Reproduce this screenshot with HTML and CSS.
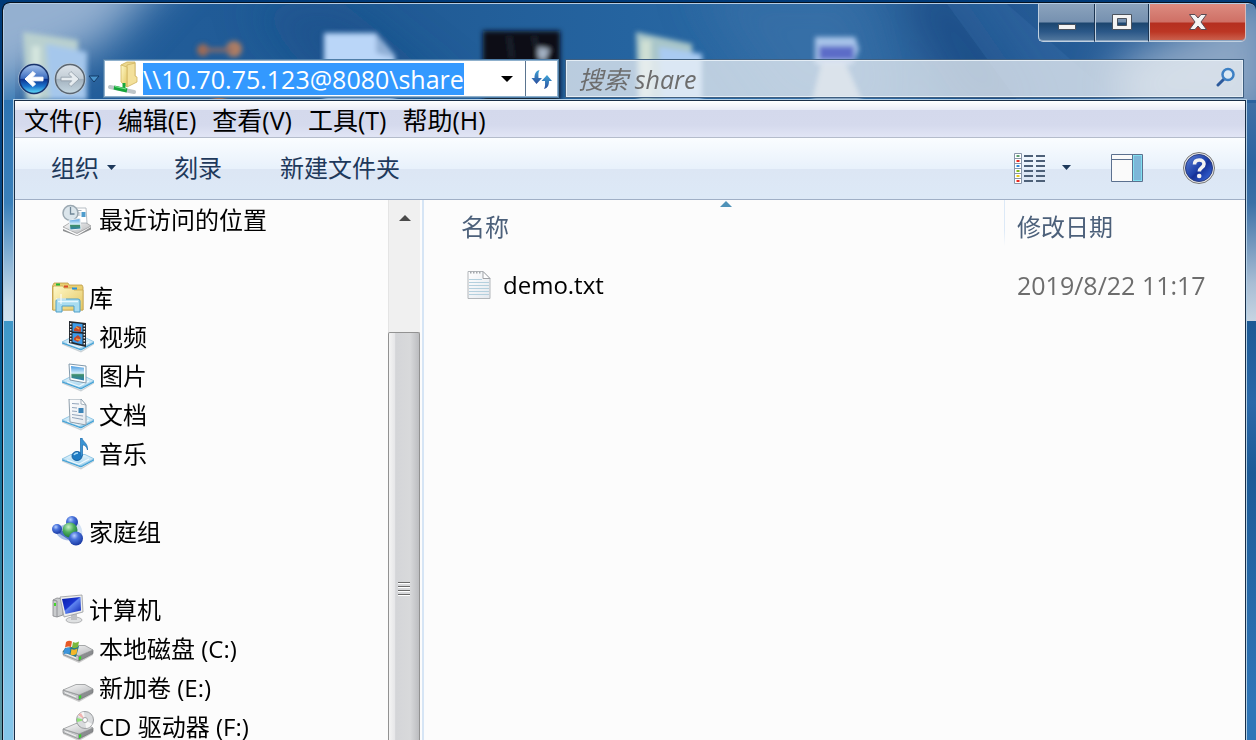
FILE: index.html
```html
<!DOCTYPE html>
<html lang="zh-CN">
<head>
    <meta charset="UTF-8">
    <meta name="viewport" content="width=device-width, initial-scale=1.0">
    <title>share</title>
    <link rel="stylesheet" href="styles.css">
</head>
<body>
    <!-- shared gradients and the glass tray under the library icons -->
    <svg class="defs" width="0" height="0" aria-hidden="true">
        <defs>
            <linearGradient id="gTray" x1="0" y1="0" x2="0" y2="1">
                <stop offset="0" stop-color="#e4f4fc"/><stop offset="1" stop-color="#9fd2ee"/>
            </linearGradient>
            <linearGradient id="gGray" x1="0" y1="0" x2="1" y2="1">
                <stop offset="0" stop-color="#fcfcfc"/><stop offset="1" stop-color="#b4b6b9"/>
            </linearGradient>
            <linearGradient id="gFolder" x1="0" y1="0" x2="1" y2="1">
                <stop offset="0" stop-color="#fff9c9"/><stop offset="1" stop-color="#e4c763"/>
            </linearGradient>
            <linearGradient id="gPaper" x1="0" y1="0" x2="1" y2="1">
                <stop offset="0" stop-color="#ffffff"/><stop offset="1" stop-color="#e3e8ee"/>
            </linearGradient>
            <linearGradient id="gSky" x1="0" y1="0" x2="0" y2="1">
                <stop offset="0" stop-color="#4a9be0"/><stop offset=".5" stop-color="#d5effb"/><stop offset=".6" stop-color="#3f8f6a"/><stop offset="1" stop-color="#2b7fb8"/>
            </linearGradient>
            <linearGradient id="gScreen" x1="0" y1="0" x2="1" y2="1">
                <stop offset="0" stop-color="#0a1fa8"/><stop offset=".45" stop-color="#1a35d0"/><stop offset=".5" stop-color="#5f85f0"/><stop offset="1" stop-color="#0a22b4"/>
            </linearGradient>
            <radialGradient id="gBlue" cx=".38" cy=".3" r=".7">
                <stop offset="0" stop-color="#b8d0ff"/><stop offset=".4" stop-color="#4a74dc"/><stop offset="1" stop-color="#1a3aa4"/>
            </radialGradient>
            <radialGradient id="gGreen" cx=".4" cy=".3" r=".7">
                <stop offset="0" stop-color="#c8f0c8"/><stop offset=".5" stop-color="#4fb060"/><stop offset="1" stop-color="#1f7a3c"/>
            </radialGradient>
            <linearGradient id="gBack" x1="0" y1="0" x2="0" y2="1">
                <stop offset="0" stop-color="#a9c6ee"/><stop offset=".48" stop-color="#3b6cc0"/><stop offset=".5" stop-color="#0b2f8c"/><stop offset=".75" stop-color="#1b74cc"/><stop offset="1" stop-color="#62e0fa"/>
            </linearGradient>
            <linearGradient id="gForward" x1="0" y1="0" x2="0" y2="1">
                <stop offset="0" stop-color="#dde4ea"/><stop offset=".48" stop-color="#c2cdd6"/><stop offset=".5" stop-color="#a3b2bf"/><stop offset="1" stop-color="#c6d8e2"/>
            </linearGradient>
            <linearGradient id="gHelp" x1="0" y1="0" x2="1" y2="1">
                <stop offset="0" stop-color="#5f84d8"/><stop offset=".5" stop-color="#1c3fa8"/><stop offset=".55" stop-color="#143096"/><stop offset="1" stop-color="#3f74e8"/>
            </linearGradient>
            <linearGradient id="gArrow" x1="0" y1="0" x2="0" y2="1">
                <stop offset="0" stop-color="#3fa3d6"/><stop offset="1" stop-color="#2b4f9e"/>
            </linearGradient>
            <symbol id="tray" viewBox="0 0 32 32">
                <path d="M0 23.500 19 31.500 32 23.500v-1L19 30 0 22z" fill="#9aa7b0" opacity=".5"/>
                <path d="M0 21v1.600L19 29.600 32 22.400v-1.600L19 27.500z" fill="#3d9fd6"/>
                <path d="M0 21 9 16.500h14L32 20.800 19 28z" fill="url(#gTray)" stroke="#7dbde0" stroke-width=".8"/>
                <path d="M5 22 17 26.400 27 21" fill="none" stroke="#fff" stroke-width="1.200" opacity=".8"/>
            </symbol>
            <symbol id="drive" viewBox="0 0 32 32">
                <path d="M1 21 17 28 31 20v2L17 30 1 23z" fill="#9c9c9c" opacity=".5"/>
                <path d="M1 18v3.500l16 6.500v-5z" fill="#c6c8ca" stroke="#808284" stroke-width=".7"/>
                <path d="M17 23v5l14-7.500v-3.500z" fill="#8b8d90" stroke="#707274" stroke-width=".7"/>
                <path d="M1 18 14 12.500h9L31 17 17 23z" fill="url(#gGray)" stroke="#939597" stroke-width=".8"/>
                <path d="M3 20.500 14 25" stroke="#f2f2f2" stroke-width="1"/>
                <path d="M17 24v3.200l2.200-1.200v-3z" fill="#35d626"/>
            </symbol>
        </defs>
    </svg>

    <div class="window">
        <!-- blurred desktop icons behind the glass -->
        <svg class="glass" width="1252" height="96" aria-hidden="true">
            <defs>
                <filter id="soft" x="-20%" y="-20%" width="140%" height="140%"><feGaussianBlur stdDeviation="2.500"/></filter>
                <filter id="haze" x="-40%" y="-60%" width="180%" height="220%"><feGaussianBlur stdDeviation="22"/></filter>
            </defs>
            <g filter="url(#haze)">
                <path d="M-60-60H190L100 40-60 110z" fill="#94b0d0"/>
                <path d="M245 0H340L460 96H330z" fill="#144a84" opacity=".45"/>
                <path d="M690-20H860L900 110H780z" fill="#3c73aa" opacity=".5"/>
                <path d="M890-20H950L1040 110H960z" fill="#12457e" opacity=".6"/>
                <path d="M1110 60 1270-20V120H1120z" fill="#8ca6c4"/>
            </g>
            <path d="M943 0h60l110 96H1013z" fill="#3e72ae" opacity=".25"/>
            <g filter="url(#soft)">
                <path d="M19 28 74 36V96H22z" fill="#b9d0cf"/>
                <path d="M42 40 83 48V96H46z" fill="#a5c7ec"/>
                <path d="M28 42h8V96h-8z" fill="#d5e6df"/>
                <circle cx="199" cy="46" r="6" fill="#a06a52"/><circle cx="230" cy="45" r="8" fill="#ad7d63"/>
                <path d="M200 44h28v4h-28z" fill="#8a6a66"/><circle cx="215" cy="94" r="6" fill="#a86c4c"/>
                <path d="M320 29H372L391 52V96H320z" fill="#bad6f8"/>
                <path d="M372 29v20l18 5z" fill="#8faed4"/>
                <path d="M479 27H556V96H479z" fill="#080c14"/>
                <path d="M534 43l12 2-5 12-7-3z" fill="#a4b2c4"/><path d="M505 32l3 22M530 32l2 10" stroke="#222b38" stroke-width="3"/>
                <path d="M632 28 688 40V96H634z" fill="#a9c6c9"/>
                <path d="M655 43 698 50V96H658z" fill="#a9cbf2"/>
                <path d="M637 36h10V96h-10z" fill="#cfe0d4"/>
                <path d="M811 33h40l4 12-6 15h-38z" fill="#a9c5ea"/>
                <path d="M815 42h35v14h-35z" fill="#5c6cc8"/>
                <path d="M817 60h25l16 36h-50z" fill="#a8bccf"/>
            </g>
        </svg>

        <header class="frame-top">
            <div class="caption-buttons">
                <button class="caption minimize" aria-label="最小化">
                    <svg width="20" height="20" viewBox="0 0 20 20"><path d="M1.500 11.500h17v5h-17z" fill="#f4f4f4" stroke="#4b535e"/></svg>
                </button>
                <button class="caption maximize" aria-label="最大化">
                    <svg width="20" height="20" viewBox="0 0 20 20"><path fill-rule="evenodd" d="M.5 1.500h19v15H.5zM5.500 5.500v7h9v-7z" fill="#f4f4f4" stroke="#4b535e"/></svg>
                </button>
                <button class="caption close" aria-label="关闭">
                    <svg width="20" height="20" viewBox="0 0 20 20"><path d="M1.500 1.500h5.500L10 5l3-3.500h5.500L13 9l5.500 7.500H13L10 13l-3 3.500H1.500L7 9z" fill="#f4f4f4" stroke="#5a4a52"/></svg>
                </button>
            </div>
            <div class="nav-row">
                <div class="travel">
                    <button class="travel-button" aria-label="后退">
                        <svg width="34" height="36" viewBox="0 0 34 36">
                            <circle cx="17" cy="18" r="16" fill="#b9c8d5" opacity=".7"/>
                            <circle cx="17" cy="18" r="14.500" fill="url(#gBack)" stroke="#18346c" stroke-width="1.500"/>
                            <path d="M8 18l8-7.500 2.500 2.500-3.200 3.200H26v3.600H15.300l3.200 3.200L16 25.500z" fill="#fff" stroke="#fff" stroke-linejoin="round"/>
                        </svg>
                    </button>
                    <button class="travel-button" aria-label="前进" disabled>
                        <svg width="34" height="36" viewBox="0 0 34 36">
                            <circle cx="17" cy="18" r="16" fill="#c6d3dd" opacity=".7"/>
                            <circle cx="17" cy="18" r="14.500" fill="url(#gForward)" stroke="#5b6671" stroke-width="1.500"/>
                            <path d="M26 18l-8-7.500-2.500 2.500 3.200 3.200H8v3.600h10.700l-3.200 3.200 2.500 2.500z" fill="#e6ecf0" stroke="#8e9ba6" stroke-width=".8" stroke-linejoin="round"/>
                        </svg>
                    </button>
                    <button class="recent" aria-label="最近的页面">
                        <svg width="12" height="8" viewBox="0 0 12 8"><path d="M1 1h10L6 7z" fill="#4b95cc" stroke="#133a66"/></svg>
                    </button>
                </div>
                <div class="address">
                    <svg class="share-icon" width="32" height="34" viewBox="0 0 32 34" aria-hidden="true">
                        <path d="M13 4 19 1h8v20l-8 4z" fill="#ecd88e" stroke="#cbb05a" stroke-width=".8"/>
                        <path d="M19 4l8-2v13l2 1v5l-10 5z" fill="#f3e09a" stroke="#cfb260" stroke-width=".8"/>
                        <path d="M13 4l6 2v20l-6-5z" fill="url(#gFolder)" stroke="#d2b662" stroke-width=".8"/>
                        <path d="M16 22v6" stroke="#18a83c" stroke-width="3"/>
                        <path d="M2 26 26 31" stroke="#bfc6c9" stroke-width="4" stroke-linecap="round"/>
                        <path d="M6 26.500 19 29.500" stroke="#14a63a" stroke-width="4"/>
                        <path d="M7 25.500 18 28" stroke="#7be08c" stroke-width="1.200"/>
                    </svg>
                    <input class="address-input" id="address" type="text" aria-label="地址" value="\\10.70.75.123@8080\share" spellcheck="false">
                    <button class="address-drop" aria-label="以前的位置">
                        <svg width="12" height="6" viewBox="0 0 12 6"><path d="M0 0h12L6 6z" fill="#000"/></svg>
                    </button>
                    <button class="refresh" aria-label="刷新">
                        <svg width="24" height="24" viewBox="0 0 24 24">
                            <path d="M9.500 3C5.500 4 4.500 7 4.500 11H1.500l5 6 5.500-6H8.500C8.500 8 8 5.500 9.500 3z" fill="url(#gArrow)"/>
                            <path d="M14 22c4-1 5-4 5-8h3l-5-6-5.500 6H15c0 3 .5 5.500-1 8z" fill="url(#gArrow)"/>
                        </svg>
                    </button>
                </div>
                <div class="search">
                    <input class="search-input" type="text" aria-label="搜索" placeholder="搜索 share">
                    <svg width="20" height="24" viewBox="0 0 20 24" aria-hidden="true">
                        <path d="M2 18l7-7" stroke="#2c5a9c" stroke-width="3" stroke-linecap="round"/>
                        <circle cx="12" cy="7.500" r="5.500" fill="#dbe9f4" stroke="#3d80c4" stroke-width="2.500"/>
                    </svg>
                </div>
            </div>
        </header>

        <div class="client">
            <nav class="menu-bar">
                <button class="menu-item">文件(F)</button>
                <button class="menu-item">编辑(E)</button>
                <button class="menu-item">查看(V)</button>
                <button class="menu-item">工具(T)</button>
                <button class="menu-item">帮助(H)</button>
            </nav>

            <div class="toolbar">
                <button class="tool">组织 <svg class="tool-arrow" width="9" height="5" viewBox="0 0 9 5"><path d="M0 0h9L4.500 5z" fill="#1e395b"/></svg></button>
                <button class="tool">刻录</button>
                <button class="tool">新建文件夹</button>
                <div class="tool-icons">
                    <button class="icon-button view-mode" aria-label="更改您的视图">
                        <svg width="32" height="32" viewBox="0 0 32 32">
                            <path d="M.5 1.500h7v30h-7z" fill="#fff" stroke="#8794a8"/>
                            <path d="M1 6.500h6M1 11.500h6M1 16.500h6M1 21.500h6M1 26.500h6" stroke="#8794a8"/>
                            <path d="M2.500 3h3v2h-3z" fill="#5c9e6e"/><path d="M2.500 8h3v2h-3z" fill="#e8281e"/><path d="M2.500 13h3v2h-3z" fill="#2f86d8"/>
                            <path d="M2.500 18h3v2h-3z" fill="#83b81a"/><path d="M2.500 23h3v2h-3z" fill="#e8c81a"/><path d="M2.500 28h3v2h-3z" fill="#e8281e"/>
                            <path d="M10 4h9M22 4h9M10 9h9M22 9h9M10 14h9M22 14h9M10 19h9M22 19h9M10 24h9M22 24h9M10 29h9M22 29h9" stroke="#4d6078" stroke-width="2"/>
                        </svg>
                        <svg width="9" height="5" viewBox="0 0 9 5"><path d="M0 0h9L4.500 5z" fill="#1e395b"/></svg>
                    </button>
                    <button class="icon-button" aria-label="显示预览窗格">
                        <svg width="32" height="28" viewBox="0 0 32 28">
                            <path d="M.5.5h31v27H.5z" fill="#fafafa" stroke="#5b708f"/>
                            <path d="M1 5.500h20.500M21.500 1v26" stroke="#5b708f"/>
                            <path d="M22.500 1.500h8v25h-8z" fill="#7db6d8" stroke="#7fe0f0"/>
                        </svg>
                    </button>
                    <button class="icon-button" aria-label="获取帮助">
                        <svg width="32" height="32" viewBox="0 0 32 32">
                            <circle cx="16" cy="16" r="15.500" fill="#e6e6e6" stroke="#777"/>
                            <circle cx="16" cy="16" r="13.500" fill="url(#gHelp)" stroke="#2a3c80"/>
                            <path d="M11.500 12.500c0-3 2-4.500 4.700-4.500 2.800 0 4.800 1.500 4.800 4 0 3.800-4.700 3.500-4.700 7.500" fill="none" stroke="#f2f2f2" stroke-width="3.600"/>
                            <circle cx="16.200" cy="24" r="2.300" fill="#f2f2f2"/>
                        </svg>
                    </button>
                </div>
            </div>

            <div class="panes">
                <aside class="sidebar">
                    <div class="tree">
                        <ul class="group">
                            <li class="leaf">
                                <svg width="32" height="32" viewBox="0 0 32 32" aria-hidden="true">
                                    <path d="M1 25 15 31.500 29 23v2.500L15 32 1 27z" fill="#8d8f91"/>
                                    <path d="M1 23 9 18h14l6 4-14 7.500z" fill="url(#gGray)" stroke="#909294" stroke-width=".7"/>
                                    <path d="M13 4h11l1 15H13z" fill="#fff" stroke="#a5adb5" stroke-width=".8"/>
                                    <path d="M14.500 6.500h5M14.500 9h4M14.500 11h4" stroke="#a8b4be"/>
                                    <path d="M19.500 8h4v5h-4z" fill="#4f9ccc"/>
                                    <circle cx="8.500" cy="9" r="7.500" fill="#dbe5eb" stroke="#9ba8b1" stroke-width="1.500"/>
                                    <path d="M8.500 3v7h4" fill="none" stroke="#6f8596" stroke-width="1.300"/>
                                    <path d="M7 16 18 14.500 19 25 8 26z" fill="url(#gSky)" stroke="#e8eef2"/>
                                </svg>
                                <span>最近访问的位置</span>
                            </li>
                        </ul>
                        <ul class="group">
                            <li class="root">
                                <svg width="32" height="32" viewBox="0 0 32 32" aria-hidden="true">
                                    <path d="M1 3l1-2h14l1 2h13l1 2v23H.5V4z" fill="#e9cf72" stroke="#bd9b45" stroke-width=".8"/>
                                    <path d="M2 4h9l1 2h9l1 2h9v20H1V5z" fill="url(#gFolder)" stroke="#c9a74e" stroke-width=".8"/>
                                    <path d="M4 1.500h4v2H4z" fill="#1fb83a"/>
                                    <path d="M12 3.500h4v2h-4z" fill="#d84a2a"/><path d="M20 5.500h5v2h-5z" fill="#2592e0"/>
                                    <path d="M4 30V19q0-2 2-2h20q2 0 2 2v11h-6v-6H10v6z" fill="#a8dcf0" stroke="#4f9fc8"/>
                                    <path d="M6 19.500h20" stroke="#e8f8ff" stroke-width="1.500"/>
                                    <path d="M9 12v10M4 17h10" stroke="#fff" stroke-width="1"/>
                                </svg>
                                <span>库</span>
                            </li>
                            <li class="leaf">
                                <svg width="32" height="32" viewBox="0 0 32 32" aria-hidden="true">
                                    <use href="#tray"/>
                                    <path d="M7 0 24 2V26L7 22z" fill="#23282e"/>
                                    <path d="M10.500 2 20.500 3V11L10.500 10.500zM10.500 12 20.500 12.800V23.500L10.500 21z" fill="#3c9be8"/>
                                    <path d="M12 8l3-3 4 1v5l-7-1zM12 17l4-3 3 3-3 4-4-2z" fill="#c2482c"/>
                                    <path d="M14 6l3 2M14 18l4 1" stroke="#f0a03c" stroke-width="1.500"/>
                                    <path d="M8.700 2v20M22.300 4v21" stroke="#e8eef2" stroke-width="1.500" stroke-dasharray="1.500 1.500"/>
                                </svg>
                                <span>视频</span>
                            </li>
                            <li class="leaf">
                                <svg width="32" height="32" viewBox="0 0 32 32" aria-hidden="true">
                                    <use href="#tray"/>
                                    <path d="M7 4 24 6V23L8 20z" fill="#fff" stroke="#7f98ab"/>
                                    <path d="M9 6 22 7.800V20.500L9.500 18z" fill="url(#gSky)"/>
                                </svg>
                                <span>图片</span>
                            </li>
                            <li class="leaf">
                                <svg width="32" height="32" viewBox="0 0 32 32" aria-hidden="true">
                                    <use href="#tray"/>
                                    <path d="M7 0H19L24 6V26L8 23z" fill="url(#gPaper)" stroke="#8f9fac"/>
                                    <path d="M19 0v5l5 1z" fill="#fff" stroke="#8f9fac" stroke-width=".8"/>
                                    <path d="M10 4.500 17 5M10 8.500 15 9M10 12 15 12.500M10 15.500 21 17M10 18.500 21 20.500" stroke="#93a5bb"/>
                                    <path d="M16.500 9h5v5h-5z" fill="#3c84b8"/>
                                </svg>
                                <span>文档</span>
                            </li>
                            <li class="leaf">
                                <svg width="32" height="32" viewBox="0 0 32 32" aria-hidden="true">
                                    <use href="#tray"/>
                                    <ellipse cx="15" cy="18" rx="5" ry="4.500" fill="#1f7cc4" stroke="#1861a0"/>
                                    <path d="M18.500 18V0h1.500c1 4 6 5 5.500 12-1-4-3-5-5-5v11z" fill="#3a94d4" stroke="#1d6bac" stroke-width=".7"/>
                                    <path d="M12 17q1-2 4-2" fill="none" stroke="#a6dcf8" stroke-width="1.500"/>
                                </svg>
                                <span>音乐</span>
                            </li>
                        </ul>
                        <ul class="group">
                            <li class="root">
                                <svg width="32" height="32" viewBox="0 0 32 32" aria-hidden="true">
                                    <path d="M3 12c0 8 8 14 18 12L14 8z" fill="#a9bfe8"/><path d="M22 5c8 2 10 12 7 18l-9-8z" fill="#d3e2f4"/>
                                    <path d="M5 16l15 10-4-12z" fill="#4a70c8"/>
                                    <circle cx="20" cy="6" r="6" fill="url(#gBlue)"/>
                                    <circle cx="5" cy="13" r="5" fill="url(#gBlue)"/>
                                    <circle cx="18" cy="14" r="7.500" fill="url(#gGreen)"/>
                                    <circle cx="24" cy="22.500" r="7" fill="url(#gBlue)"/>
                                </svg>
                                <span>家庭组</span>
                            </li>
                        </ul>
                        <ul class="group">
                            <li class="root">
                                <svg width="32" height="32" viewBox="0 0 32 32" aria-hidden="true">
                                    <path d="M1 6 5 4l6 1v16l-6 2-4-1z" fill="#c9cbcd" stroke="#85878a" stroke-width=".8"/>
                                    <path d="M1 6l4 1v16" fill="none" stroke="#85878a" stroke-width=".8"/>
                                    <path d="M2 9h2v3H2z" fill="#46d62a"/>
                                    <ellipse cx="22" cy="26" rx="8" ry="3" fill="#dfe1e2" stroke="#999b9d" stroke-width=".7"/>
                                    <path d="M19 20h6v6h-6z" fill="#bfc1c4"/>
                                    <path d="M8 3 30 1 31 18 12 23z" fill="#eceded" stroke="#97999c" stroke-width=".8"/>
                                    <path d="M10 5 28.500 3 29 16.500 13.500 20z" fill="url(#gScreen)"/>
                                </svg>
                                <span>计算机</span>
                            </li>
                            <li class="leaf">
                                <svg width="32" height="32" viewBox="0 0 32 32" aria-hidden="true">
                                    <use href="#drive"/>
                                    <path d="M1 19 3 15 17 13 14 24z" fill="#23798e"/>
                                    <path d="M4 9q3-2 6-.5L9 14q-3-1-6 .5z" fill="#e65a28"/>
                                    <path d="M11 9q3 1.500 6-.5L16 14q-3 2-6 .5z" fill="#7cb83c"/>
                                    <path d="M2.500 16q3-2 6-.5L7.500 21q-3-1-6 .5z" fill="#3c94dc"/>
                                    <path d="M9.500 16q3 1.500 6-.5L14.500 21q-3 2-6 .5z" fill="#f4b82a"/>
                                </svg>
                                <span>本地磁盘 (C:)</span>
                            </li>
                            <li class="leaf">
                                <svg width="32" height="32" viewBox="0 0 32 32" aria-hidden="true"><use href="#drive"/></svg>
                                <span>新加卷 (E:)</span>
                            </li>
                            <li class="leaf">
                                <svg width="32" height="32" viewBox="0 0 32 32" aria-hidden="true">
                                    <use href="#drive"/>
                                    <circle cx="23" cy="9" r="8.500" fill="#d9dbdd" stroke="#9b9da0"/>
                                    <path d="M23 9 16 5q2-4 6-4zM23 9l7 4q-2 4-6 4z" fill="#f5f5f5"/>
                                    <path d="M23 9 15 7v4z" fill="#8fe07a"/><path d="M23 9l-7-5 3-2z" fill="#f0b4b0"/>
                                    <circle cx="23" cy="9" r="2.500" fill="#fff" stroke="#a5a7a9"/>
                                </svg>
                                <span>CD 驱动器 (F:)</span>
                            </li>
                        </ul>
                    </div>
                    <div class="scrollbar">
                        <button class="scroll-up" aria-label="向上滚动">
                            <svg width="12" height="6" viewBox="0 0 12 6"><path d="M6 0l6 6H0z" fill="#4a4a4a"/></svg>
                        </button>
                        <div class="thumb"><span class="grip"></span></div>
                    </div>
                </aside>

                <main class="files">
                    <table class="file-table">
                        <thead>
                            <tr>
                                <th class="col-name">
                                    <svg class="sort" width="12" height="6" viewBox="0 0 12 6" aria-hidden="true"><path d="M6 0l6 6H0z" fill="#4f92b8"/></svg>
                                    名称
                                </th>
                                <th class="col-date">修改日期</th>
                            </tr>
                        </thead>
                        <tbody>
                            <tr>
                                <td>
                                    <div class="file-name">
                                        <svg width="24" height="30" viewBox="0 0 24 30" aria-hidden="true">
                                            <path d="M1 1.500h15l7 7v20H1z" fill="url(#gPaper)" stroke="#b2b6ba"/>
                                            <path d="M2 9.500h13M2 12.500h20M2 15.500h20M2 18.500h20M2 21.500h20M2 24.500h20" stroke="#b4d0de"/>
                                            <path d="M16 1.500v7h7z" fill="#fff" stroke="#9fa3a7"/>
                                            <path d="M3 2.500h12" stroke="#a4a8ac" stroke-width="2" stroke-dasharray="1.500 1.500"/>
                                        </svg>
                                        demo.txt
                                    </div>
                                </td>
                                <td class="date">2019/8/22 11:17</td>
                            </tr>
                        </tbody>
                    </table>
                </main>
            </div>
        </div>
    </div>

    <script>
        // address text starts out selected, ready to be typed over
        const address = document.getElementById("address");
        address.focus();
        address.select();
    </script>
</body>
</html>
```
FILE: styles.css
```css
* {
    box-sizing: border-box;
}
body {
    margin: 0;
    padding: 2px 0 0 2px;
    height: 100vh;
    overflow: hidden;
    font-family: "Open Sans", "Noto Sans CJK SC", sans-serif;
    font-size: 24px;
    line-height: 30px;
    color: #000;
    background: linear-gradient(#003a78, #0a4f8c 300px, #0a6c9c 420px, #5f99a4);
}
button {
    margin: 0;
    padding: 0;
    border: none;
    background: none;
    font: inherit;
    color: inherit;
    display: flex;
    align-items: center;
    justify-content: center;
}
input {
    min-width: 0;
    padding: 0;
    border: none;
    outline: none;
    background: none;
    font: inherit;
    color: inherit;
}
svg {
    display: block;
    flex: none;
}
.defs {
    position: absolute;
}
.window {
    position: relative;
    display: flex;
    flex-direction: column;
    height: 100%;
    border: 1px solid #07121f;
    border-width: 1px 0 0 1px;
    border-radius: 8px 8px 0 0;
    box-shadow: inset 1px 1px 0 #b4cce4;
    padding: 1px 0 0 1px;
    overflow: hidden;
    background:
        linear-gradient(#22609e, #2d74b2 100px, #3a80ba 200px, #c8dcec 300px, #d0e2ef 318px, #3f97c8 318px, #54afd8 520px, #84c6ea 700px) left / 12px 100% no-repeat,
        linear-gradient(90deg, #225e9c, #205a94 30%, #2564a0 50%, #2f6ba4 65%, #245a94 80%, #2b629e) top / 100% 100px no-repeat,
        linear-gradient(#5c82ae, #2c64a0 160px, #3c70a6 200px, #a8bdd4 280px, #c6d4e2 318px, #1c5994 318px, #2a68a8 400px, #1c5a96 470px, #2f76b8 700px);
}
.glass {
    position: absolute;
    left: 1px;
    top: 1px;
}

/* title bar */
.frame-top {
    position: relative;
    padding: 0 12px;
}
.caption-buttons {
    display: flex;
    justify-content: flex-end;
    height: 55px;
    margin-right: -2px;
    align-items: flex-start;
}
.caption {
    width: 57px;
    height: 38px;
    border: 1px solid #c0d0e0;
    border-top: none;
    border-right: 1px solid #1c3552;
    background: linear-gradient(#8ba3bd, #7691b0 48%, #1c466f 52%, #2b5888 75%, #54799f);
    box-shadow: inset 0 -1px 0 #8aa4c0;
}
.minimize {
    border-radius: 0 0 0 5px;
}
.maximize {
    width: 54px;
}
.close {
    width: 97px;
    border-right-color: #d9b9b9;
    border-radius: 0 0 5px 0;
    background: linear-gradient(#dc8b80, #cf7066 48%, #b52f20 52%, #bc3624 75%, #cc6552);
}
.nav-row {
    display: flex;
    align-items: stretch;
    height: 39px;
    margin-bottom: 2px;
}
.travel {
    display: flex;
    align-items: center;
    width: 87px;
    flex: none;
}
.travel-button {
    width: 36px;
}
.recent {
    width: 12px;
}
.address {
    display: flex;
    flex: 464 1 0;
    min-width: 0;
    border: 1px solid #4f7ea8;
    outline: 1px solid #8fb0cc;
    outline-offset: -2px;
    background: #fff;
}
.share-icon {
    margin: 1px 0 0 4px;
}
.address-input {
    flex: 1;
    margin-left: 3px;
    height: 32px;
    align-self: center;
    font-size: 25px;
}
.address-input::selection {
    background: #3399ff;
    color: #fff;
}
.address-drop {
    width: 36px;
}
.refresh {
    width: 33px;
    border-left: 1px solid #5b7590;
}
.search {
    display: flex;
    flex: 672 1 0;
    min-width: 0;
    align-items: center;
    margin-left: 6px;
    padding: 0 7px 0 12px;
    border: 1px solid #3f5f80;
    box-shadow: inset 0 0 0 1px #e4edf5;
    background: rgba(236, 240, 244, 0.75);
}
.search-input {
    flex: 1;
    font-size: 25px;
}
.search-input::placeholder {
    color: #6d6d6d;
    font-style: italic;
    opacity: 1;
}

/* client area */
.client {
    position: relative;
    display: flex;
    flex-direction: column;
    flex: 1;
    min-height: 0;
    margin: 0 10px;
    border: 1px solid #1a2f48;
    border-bottom: none;
    box-shadow: 0 0 0 1px #b4d0e6;
    background: #fcfcfc;
}
.menu-bar {
    display: flex;
    flex: none;
    gap: 16px;
    height: 37px;
    padding: 2px 9px 0;
    border-bottom: 1px solid #b4bccb;
    font-size: 25px;
    background: linear-gradient(#fff, #e8ebf6 9px, #d4d9ec 9px, #d5daed 24px, #e1e5f5);
}
.toolbar {
    display: flex;
    flex: none;
    align-items: center;
    height: 62px;
    padding: 0 30px 2px 36px;
    border-bottom: 1px solid #a0afc6;
    color: #1e395b;
    background: linear-gradient(#fafdff, #e8f1fb 50%, #dce6f4 50%, #dde9f7);
}
.tool {
    margin-right: 58px;
}
.tool-arrow {
    margin-left: 8px;
}
.tool-icons {
    display: flex;
    align-items: center;
    gap: 40px;
    margin-left: auto;
}
.view-mode {
    gap: 16px;
}
.panes {
    display: flex;
    flex: 1;
    min-height: 0;
}
.sidebar {
    display: flex;
    flex: none;
    width: 409px;
    padding-right: 2px;
    border-right: 2px solid #d6e5f5;
}
.tree {
    flex: 1;
    overflow: hidden;
}
.group {
    margin: 0 0 39px;
    padding: 0;
    list-style: none;
}
.root, .leaf {
    display: flex;
    align-items: center;
    gap: 5px;
    height: 39px;
    padding-left: 37px;
    white-space: nowrap;
}
.leaf {
    padding-left: 47px;
}
.scrollbar {
    display: flex;
    flex-direction: column;
    width: 32px;
    border-left: 1px solid #e4e4e4;
    background: #f0f0f0;
}
.scroll-up {
    height: 36px;
    margin-bottom: 96px;
}
.thumb {
    display: flex;
    justify-content: center;
    align-items: center;
    flex: 1;
    margin-left: -1px;
    border: 1px solid #929292;
    border-bottom: none;
    border-radius: 2px 2px 0 0;
    background: linear-gradient(90deg, #f4f4f4, #e6e6e8 20%, #d4d5d8 22%, #d8d9db 70%, #bcbdc0);
}
.grip {
    width: 12px;
    height: 14px;
    margin-top: 104px;
    background: repeating-linear-gradient(#6a6a6a 0 1px, #fff 1px 2px, transparent 2px 4px);
}

/* file list */
.files {
    flex: 1;
    min-width: 0;
    padding-left: 24px;
}
.file-table {
    width: 100%;
    border-collapse: collapse;
    table-layout: fixed;
}
th, td {
    padding: 0 0 0 13px;
    text-align: left;
    font-weight: normal;
}
th {
    position: relative;
    height: 54px;
    color: #4c607a;
}
.col-date {
    width: 241px;
    background: linear-gradient(#dce9f7, #dce9f7 30px, #fcfcfc 46px) left / 1px 100% no-repeat;
}
.sort {
    position: absolute;
    top: 1px;
    left: calc(50% - 6px);
}
td {
    height: 62px;
}
.file-name {
    display: flex;
    align-items: center;
    gap: 12px;
    padding-left: 6px;
}
.date {
    font-size: 25px;
    color: #6d6d6d;
}
```
